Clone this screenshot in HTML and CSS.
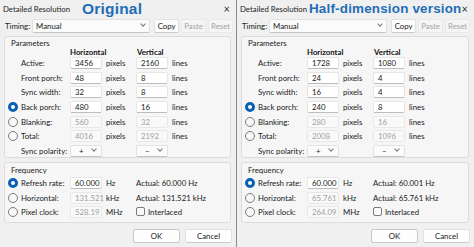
FILE: index.html
```html
<!DOCTYPE html>
<html>
<head>
<meta charset="utf-8">
<link rel="stylesheet" href="styles.css">
</head>
<body>
<div class="screen">
  <div class="dialog">
    <div class="titlebar">
      <span class="title">Detailed Resolution</span>
      <span class="caption cap-left">Original</span>
      <span class="close">×</span>
    </div>
    <div class="timing">
      <span class="timing-label">Timing:</span>
      <div class="combo combo-wide"><span>Manual</span><span class="chev"></span></div>
      <span class="btn">Copy</span>
      <span class="btn disabled">Paste</span>
      <span class="btn disabled">Reset</span>
    </div>
    <div class="group params">
      <div class="group-label">Parameters</div>
      <div class="grid">
        <span class="head head-h">Horizontal</span><span class="head head-v">Vertical</span>
        <span class="lbl">Active:</span><span class="inp">3456</span><span class="unit">pixels</span><span class="inp">2160</span><span class="unit">lines</span>
        <span class="lbl">Front porch:</span><span class="inp">48</span><span class="unit">pixels</span><span class="inp">8</span><span class="unit">lines</span>
        <span class="lbl">Sync width:</span><span class="inp">32</span><span class="unit">pixels</span><span class="inp">8</span><span class="unit">lines</span>
        <span class="lbl radio-lbl"><span class="radio on"></span>Back porch:</span><span class="inp">480</span><span class="unit">pixels</span><span class="inp">16</span><span class="unit">lines</span>
        <span class="lbl radio-lbl"><span class="radio"></span>Blanking:</span><span class="inp dis">560</span><span class="unit">pixels</span><span class="inp dis">32</span><span class="unit">lines</span>
        <span class="lbl radio-lbl"><span class="radio"></span>Total:</span><span class="inp dis">4016</span><span class="unit">pixels</span><span class="inp dis">2192</span><span class="unit">lines</span>
        <span class="lbl">Sync polarity:</span><span class="combo small"><span class="sym">+</span><span class="chev"></span></span><span></span><span class="combo small"><span class="sym">–</span><span class="chev"></span></span><span></span>
      </div>
    </div>
    <div class="group freq">
      <div class="group-label">Frequency</div>
      <div class="grid">
        <span class="lbl radio-lbl"><span class="radio on"></span>Refresh rate:</span><span class="inp">60.000</span><span class="unit">Hz</span><span class="actual">Actual: 60.000 Hz</span>
        <span class="lbl radio-lbl"><span class="radio"></span>Horizontal:</span><span class="inp dis">131.521</span><span class="unit">kHz</span><span class="actual">Actual: 131.521 kHz</span>
        <span class="lbl radio-lbl"><span class="radio"></span>Pixel clock:</span><span class="inp dis">528.19</span><span class="unit">MHz</span><span class="actual"><span class="check"></span>Interlaced</span>
      </div>
    </div>
    <div class="footer">
      <span class="btn big default">OK</span>
      <span class="btn big">Cancel</span>
    </div>
  </div>

  <div class="dialog right">
    <div class="titlebar">
      <span class="title">Detailed Resolution</span>
      <span class="caption cap-right">Half-dimension version</span>
      <span class="close">×</span>
    </div>
    <div class="timing">
      <span class="timing-label">Timing:</span>
      <div class="combo combo-wide"><span>Manual</span><span class="chev"></span></div>
      <span class="btn">Copy</span>
      <span class="btn disabled">Paste</span>
      <span class="btn disabled">Reset</span>
    </div>
    <div class="group params">
      <div class="group-label">Parameters</div>
      <div class="grid">
        <span class="head head-h">Horizontal</span><span class="head head-v">Vertical</span>
        <span class="lbl">Active:</span><span class="inp">1728</span><span class="unit">pixels</span><span class="inp">1080</span><span class="unit">lines</span>
        <span class="lbl">Front porch:</span><span class="inp">24</span><span class="unit">pixels</span><span class="inp">4</span><span class="unit">lines</span>
        <span class="lbl">Sync width:</span><span class="inp">16</span><span class="unit">pixels</span><span class="inp">4</span><span class="unit">lines</span>
        <span class="lbl radio-lbl"><span class="radio on"></span>Back porch:</span><span class="inp">240</span><span class="unit">pixels</span><span class="inp">8</span><span class="unit">lines</span>
        <span class="lbl radio-lbl"><span class="radio"></span>Blanking:</span><span class="inp dis">280</span><span class="unit">pixels</span><span class="inp dis">16</span><span class="unit">lines</span>
        <span class="lbl radio-lbl"><span class="radio"></span>Total:</span><span class="inp dis">2008</span><span class="unit">pixels</span><span class="inp dis">1096</span><span class="unit">lines</span>
        <span class="lbl">Sync polarity:</span><span class="combo small"><span class="sym">+</span><span class="chev"></span></span><span></span><span class="combo small"><span class="sym">–</span><span class="chev"></span></span><span></span>
      </div>
    </div>
    <div class="group freq">
      <div class="group-label">Frequency</div>
      <div class="grid">
        <span class="lbl radio-lbl"><span class="radio on"></span>Refresh rate:</span><span class="inp">60.000</span><span class="unit">Hz</span><span class="actual">Actual: 60.001 Hz</span>
        <span class="lbl radio-lbl"><span class="radio"></span>Horizontal:</span><span class="inp dis">65.761</span><span class="unit">kHz</span><span class="actual">Actual: 65.761 kHz</span>
        <span class="lbl radio-lbl"><span class="radio"></span>Pixel clock:</span><span class="inp dis">264.09</span><span class="unit">MHz</span><span class="actual"><span class="check"></span>Interlaced</span>
      </div>
    </div>
    <div class="footer">
      <span class="btn big default">OK</span>
      <span class="btn big">Cancel</span>
    </div>
  </div>
</div>
</body>
</html>
```

FILE: styles.css
```css
* { box-sizing: border-box; }
html, body { margin: 0; padding: 0; }
body {
  width: 474px;
  height: 247px;
  overflow: hidden;
  background: #f0f0f0;
  font-family: Lato, "Noto Sans", sans-serif;
  font-size: 7.8px;
  color: #1a1a1a;
}
.screen {
  display: flex;
  width: 474px;
  height: 247px;
}
.dialog {
  width: 236px;
  height: 247px;
  background: #f0f0f0;
  display: flex;
  flex-direction: column;
}
.dialog.right {
  width: 238px;
  border-left: 1px solid #8a8a8a;
}
.titlebar {
  position: relative;
  height: 17px;
  display: flex;
  align-items: center;
  padding-left: 3px;
  padding-top: 1px;
}
.title { color: #222; }
.caption {
  position: absolute;
  top: 0px;
  font-family: "Liberation Sans", Arial, sans-serif;
  font-weight: bold;
  font-size: 15.5px;
  color: #1f6db5;
  letter-spacing: 0.2px;
}
.cap-left { left: 82px; }
.cap-right { left: 72px; font-size: 13.4px; top: 1px; }
.close {
  position: absolute;
  right: 6px;
  top: 2px;
  font-size: 11px;
  color: #333;
}
.timing {
  height: 15px;
  margin-top: 1px;
  display: flex;
  align-items: center;
  padding-left: 5px;
}
.timing-label { margin-right: 2px; white-space: nowrap; }
.combo {
  display: flex;
  align-items: center;
  justify-content: space-between;
  background: #fbfbfb;
  border: 1px solid #e2e2e2;
  border-bottom-color: #c4c4c4;
  border-radius: 2px;
  height: 14px;
  padding: 0 4px 0 3px;
}
.combo-wide { width: 118px; margin-right: 4px; }
.chev {
  width: 4px;
  height: 4px;
  border-right: 1px solid #777;
  border-bottom: 1px solid #777;
  transform: rotate(45deg);
  margin-top: -3px;
}
.btn {
  display: flex;
  align-items: center;
  justify-content: center;
  width: 25px;
  height: 14px;
  margin-right: 2px;
  background: #fdfdfd;
  border: 1px solid #e0e0e0;
  border-bottom-color: #cacaca;
  border-radius: 2px;
  color: #1a1a1a;
}
.btn.disabled {
  background: #f5f5f5;
  border-color: #e9e9e9;
  color: #a3a3a3;
}
.group {
  margin: 0 5px 0 4px;
  border: 1px solid #dcdcdc;
  border-radius: 3px;
  background: #f6f6f6;
}
.params {
  margin-top: 3px;
  height: 122px;
  padding-top: 2px;
}
.freq {
  margin-top: 4px;
  height: 61px;
  padding-top: 3px;
}
.group-label {
  padding-left: 6px;
  height: 9px;
  line-height: 9px;
  color: #222;
}
.grid {
  display: grid;
  grid-template-columns: 62px 32px 34px 32px 1fr;
  grid-template-rows: 8px;
  grid-auto-rows: 14.6px;
  align-items: center;
  padding-left: 3px;
}
.freq .grid {
  grid-template-columns: 62px 32px 34px 1fr;
  grid-template-rows: none;
  grid-auto-rows: 14.4px;
  padding-top: 1px;
}
.head {
  font-weight: bold;
  color: #111;
  line-height: 8px;
  white-space: nowrap;
}
.head-h { grid-column: 2 / 4; padding-left: 0; }
.head-v { grid-column: 4 / 6; padding-left: 1px; }
.lbl {
  padding-left: 13px;
  display: flex;
  align-items: center;
  white-space: nowrap;
}
.radio-lbl { padding-left: 0; }
.radio {
  width: 10px;
  height: 10px;
  border-radius: 50%;
  border: 1px solid #7a7a7a;
  background: #f9f9f9;
  margin-right: 3px;
  flex: none;
}
.radio.on {
  border: 3px solid #0a5fb4;
  background: #ffffff;
}
.inp {
  height: 12px;
  background: #ffffff;
  border: 1px solid #e6e6e6;
  border-bottom-color: #bdbdbd;
  border-radius: 2px;
  padding-left: 4px;
  line-height: 10px;
  color: #1a1a1a;
}
.inp.dis {
  background: #f9f9f9;
  border-color: #e8e8e8;
  color: #a0a0a0;
}
.unit { padding-left: 4px; }
.actual {
  display: flex;
  align-items: center;
  white-space: nowrap;
}
.check {
  width: 9px;
  height: 9px;
  border: 1px solid #7a7a7a;
  border-radius: 2px;
  background: #fbfbfb;
  margin-right: 3px;
}
.combo.small {
  height: 12px;
  padding: 0 5px 0 8px;
}
.sym { color: #222; }
.footer {
  display: flex;
  justify-content: flex-end;
  padding-top: 6px;
  padding-right: 4px;
  gap: 5px;
}
.btn.big {
  width: 47px;
  height: 14px;
  margin-right: 0;
}
.btn.default { border-color: #c8c8c8; }
```
